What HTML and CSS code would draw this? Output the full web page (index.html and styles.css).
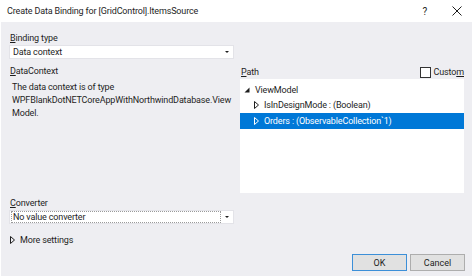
FILE: index.html
```html
<!DOCTYPE html>
<html lang="en">
<head>
    <meta charset="UTF-8">
    <title>Create Data Binding</title>
    <link rel="stylesheet" href="styles.css">
</head>
<body>
    <div class="dialog">
        <div class="titlebar">
            <span class="title">Create Data Binding for [GridControl].ItemsSource</span>
            <span class="title-buttons">
                <span class="help">?</span>
                <svg class="close" width="10" height="10" viewBox="0 0 10 10">
                    <path d="M0.5 0.5 L9.5 9.5 M9.5 0.5 L0.5 9.5" stroke="#1e1e1e" stroke-width="1" fill="none"/>
                </svg>
            </span>
        </div>

        <div class="content">
            <div class="left-block">
                <div class="label"><u>B</u>inding type</div>
                <div class="combo">
                    <span>Data context</span>
                    <span class="combo-arrow"></span>
                </div>
            </div>

            <div class="columns">
                <div class="col">
                    <div class="label"><u>D</u>ataContext</div>
                    <p class="description">
                        The data context is of type
                        WPFBlankDotNETCoreAppWithNorthwindDatabase.View
                        Model.
                    </p>
                </div>
                <div class="col">
                    <div class="path-header">
                        <span class="label"><u>P</u>ath</span>
                        <label class="checkbox">
                            <span class="box"></span>
                            <span>Custo<u>m</u></span>
                        </label>
                    </div>
                    <div class="tree">
                        <div class="tree-item">
                            <svg class="expander" width="6" height="6" viewBox="0 0 6 6">
                                <path d="M5.5 0.5 L5.5 5.5 L0.5 5.5 Z" fill="#1e1e1e"/>
                            </svg>
                            <span>ViewModel</span>
                        </div>
                        <div class="tree-item child">
                            <svg class="expander" width="5" height="8" viewBox="0 0 5 8">
                                <path d="M0.5 0.5 L4.5 4 L0.5 7.5 Z" fill="none" stroke="#1e1e1e" stroke-width="1"/>
                            </svg>
                            <span>IsInDesignMode : (Boolean)</span>
                        </div>
                        <div class="tree-item child selected">
                            <svg class="expander" width="5" height="8" viewBox="0 0 5 8">
                                <path d="M0.5 0.5 L4.5 4 L0.5 7.5 Z" fill="none" stroke="#fff" stroke-width="1"/>
                            </svg>
                            <span>Orders : (ObservableCollection`1)</span>
                        </div>
                    </div>
                </div>
            </div>

            <div class="left-block converter">
                <div class="label"><u>C</u>onverter</div>
                <div class="combo focused">
                    <span class="combo-text">No value converter</span>
                    <span class="combo-arrow"></span>
                </div>
                <div class="more-settings">
                    <svg class="expander" width="5" height="8" viewBox="0 0 5 8">
                        <path d="M0.5 0.5 L4.5 4 L0.5 7.5 Z" fill="none" stroke="#1e1e1e" stroke-width="1"/>
                    </svg>
                    <span>More settings</span>
                </div>
            </div>

            <div class="footer">
                <button class="btn default">OK</button>
                <button class="btn">Cancel</button>
            </div>
        </div>
    </div>
</body>
</html>
```

FILE: styles.css
```css
* {
    margin: 0;
    padding: 0;
    box-sizing: border-box;
}

body {
    font-family: Roboto, "Open Sans", sans-serif;
    font-size: 9px;
    letter-spacing: -0.15px;
    color: #1e1e1e;
    background: #fff;
    width: 474px;
    height: 279px;
    overflow: hidden;
}

.dialog {
    width: 474px;
    height: 279px;
    display: flex;
    flex-direction: column;
    padding: 0 2px 3px 1px;
}

.titlebar {
    height: 22px;
    display: flex;
    align-items: center;
    justify-content: space-between;
    padding-left: 6px;
    font-size: 9px;
}

.title-buttons {
    display: flex;
    align-items: center;
}

.help {
    font-size: 10px;
    margin-right: 25px;
}

.close {
    margin-right: 10px;
}

.content {
    flex: 1;
    background: #eeeef2;
    padding: 0 7px 0 8px;
    display: flex;
    flex-direction: column;
}

.left-block {
    width: 225px;
}

.label {
    height: 13px;
    line-height: 13px;
    padding-left: 1px;
}

.left-block > .label {
    margin-top: 10px;
}

.combo {
    height: 14px;
    background: #fff;
    border: 1px solid #e3e3e8;
    display: flex;
    align-items: center;
    justify-content: space-between;
    padding: 0 4px 0 3px;
}

.combo.focused .combo-text {
    flex: 1;
    border: 1px dotted #9a9a9a;
    margin-left: -2px;
    margin-right: 4px;
    padding-left: 1px;
    line-height: 10px;
}

.combo-arrow {
    width: 0;
    height: 0;
    border-left: 2px solid transparent;
    border-right: 2px solid transparent;
    border-top: 2px solid #1e1e1e;
}

.columns {
    display: flex;
    gap: 7px;
    margin-top: 6px;
}

.col {
    width: 224px;
}

.description {
    padding-left: 3px;
    margin-top: 3px;
    line-height: 13px;
    width: 225px;
}

.path-header {
    height: 14px;
    display: flex;
    justify-content: space-between;
    align-items: center;
}

.checkbox {
    display: flex;
    align-items: center;
    gap: 3px;
}

.box {
    width: 11px;
    height: 11px;
    border: 1px solid #333;
    background: #fff;
}

.tree {
    height: 114px;
    background: #fff;
    padding-top: 3px;
}

.tree-item {
    height: 15px;
    display: flex;
    align-items: center;
    padding-left: 4px;
    white-space: nowrap;
}

.tree-item .expander {
    margin-right: 5px;
}

.tree-item.child {
    padding-left: 14px;
    height: 16px;
}

.tree-item.selected {
    background: #0078d7;
    color: #fff;
}

.converter > .label {
    margin-top: 4px;
}

.more-settings {
    display: flex;
    align-items: center;
    margin-top: 9px;
    padding-left: 1px;
    height: 13px;
}

.more-settings .expander {
    margin-right: 5px;
}

.footer {
    margin-top: auto;
    display: flex;
    justify-content: flex-end;
    gap: 3px;
    padding-bottom: 5px;
}

.btn {
    width: 55px;
    height: 17px;
    font-family: inherit;
    font-size: 9px;
    color: #1e1e1e;
    background: #e1e1e1;
    border: 1px solid #adadad;
}

.btn.default {
    border-color: #3c8fd8;
}
```
